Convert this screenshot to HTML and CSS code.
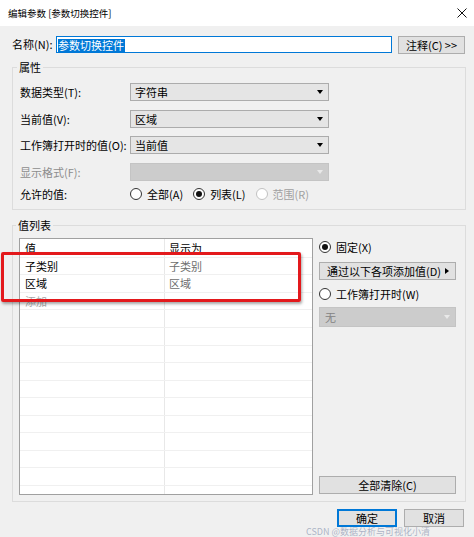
FILE: index.html
```html
<!DOCTYPE html>
<html lang="zh-CN">
<head>
<meta charset="utf-8">
<title>编辑参数</title>
<link rel="stylesheet" href="styles.css">
</head>
<body>
<div class="window">
  <div class="titlebar">
    <span class="title">编辑参数 [参数切换控件]</span>
    <svg class="close" width="10" height="10" viewBox="0 0 10 10"><path d="M0.5 0.5 L9.5 9.5 M9.5 0.5 L0.5 9.5" stroke="#111" stroke-width="1" fill="none"/></svg>
  </div>
  <div class="content">
    <div class="name-row">
      <span class="name-label">名称(N):</span>
      <div class="name-input"><span class="sel">参数切换控件</span></div>
      <div class="btn btn-note">注释(C) &gt;&gt;</div>
    </div>

    <fieldset class="group props">
      <legend>属性</legend>
      <div class="prop-rows">
        <div class="prop-row">
          <span class="plabel">数据类型(T):</span>
          <div class="combo"><span>字符串</span><i class="arrow"></i></div>
        </div>
        <div class="prop-row">
          <span class="plabel">当前值(V):</span>
          <div class="combo"><span>区域</span><i class="arrow"></i></div>
        </div>
        <div class="prop-row">
          <span class="plabel">工作簿打开时的值(O):</span>
          <div class="combo"><span>当前值</span><i class="arrow"></i></div>
        </div>
        <div class="prop-row">
          <span class="plabel disabled">显示格式(F):</span>
          <div class="combo combo-disabled"><span></span><i class="arrow"></i></div>
        </div>
        <div class="prop-row radio-row">
          <span class="plabel">允许的值:</span>
          <span class="radio"><i class="dot"></i>全部(A)</span>
          <span class="radio checked"><i class="dot"></i>列表(L)</span>
          <span class="radio radio-disabled"><i class="dot"></i>范围(R)</span>
        </div>
      </div>
    </fieldset>

    <fieldset class="group values">
      <legend>值列表</legend>
      <div class="values-inner">
        <div class="list">
          <div class="lrow lhead"><div class="c1">值</div><div class="c2">显示为</div></div>
          <div class="lrow"><div class="c1">子类别</div><div class="c2 dim">子类别</div></div>
          <div class="lrow"><div class="c1">区域</div><div class="c2 dim">区域</div></div>
          <div class="lrow"><div class="c1 add">添加</div><div class="c2"></div></div>
          <div class="lrow"><div class="c1"></div><div class="c2"></div></div>
          <div class="lrow"><div class="c1"></div><div class="c2"></div></div>
          <div class="lrow"><div class="c1"></div><div class="c2"></div></div>
          <div class="lrow"><div class="c1"></div><div class="c2"></div></div>
          <div class="lrow"><div class="c1"></div><div class="c2"></div></div>
          <div class="lrow"><div class="c1"></div><div class="c2"></div></div>
          <div class="lrow"><div class="c1"></div><div class="c2"></div></div>
          <div class="lrow"><div class="c1"></div><div class="c2"></div></div>
          <div class="lrow"><div class="c1"></div><div class="c2"></div></div>
          <div class="lrow"><div class="c1"></div><div class="c2"></div></div>
          <div class="lrow"><div class="c1"></div><div class="c2"></div></div>
        </div>
        <div class="side">
          <span class="radio checked side-r1"><i class="dot"></i>固定(X)</span>
          <div class="btn btn-add"><span>通过以下各项添加值(D)</span><i class="rarrow"></i></div>
          <span class="radio side-r2"><i class="dot"></i>工作簿打开时(W)</span>
          <div class="combo combo-disabled side-combo"><span>无</span><i class="arrow"></i></div>
          <div class="btn btn-clear">全部清除(C)</div>
        </div>
      </div>
    </fieldset>

    <div class="footer">
      <div class="btn btn-ok">确定</div>
      <div class="btn">取消</div>
    </div>
  </div>

  <div class="highlight"></div>
  <div class="watermark">CSDN @数据分析与可视化小清</div>
</div>
</body>
</html>
```

FILE: styles.css
```css
* { box-sizing: border-box; }
html, body { margin: 0; padding: 0; }
body {
  width: 474px;
  height: 537px;
  overflow: hidden;
  background: #f0f0f0;
  font-family: "Noto Sans CJK SC", "Microsoft YaHei", sans-serif;
  font-size: 11px;
  line-height: 14px;
  color: #000;
}
.window {
  position: relative;
  height: 537px;
  display: flex;
  flex-direction: column;
}
.titlebar {
  height: 26px;
  flex: none;
  background: #fff;
  display: flex;
  align-items: center;
  justify-content: space-between;
  padding: 0 7px 0 8px;
}
.title { font-size: 9.5px; }
.close { display: block; }

.content {
  flex: 1;
  display: flex;
  flex-direction: column;
  padding: 10px 8px 0 12px;
}

/* name row */
.name-row {
  display: flex;
  align-items: flex-start;
  height: 18px;
}
.name-label { width: 44px; line-height: 17px; }
.name-input {
  width: 336px;
  height: 17px;
  border: 1px solid #0078d7;
  background: #fff;
  padding: 1px;
}
.sel {
  display: inline-block;
  background: #0078d7;
  color: #fff;
  line-height: 13px;
  padding-right: 1px;
}
.btn {
  background: #e1e1e1;
  border: 1px solid #adadad;
  height: 18px;
  width: 60px;
  display: flex;
  align-items: center;
  justify-content: center;
  line-height: 14px;
}
.btn-note { width: 67px; margin-left: 6px; }

/* groups */
.group {
  margin: 0;
  min-width: 0;
  border: 1px solid #dcdcdc;
}
.group legend {
  padding: 0 2px;
  margin-left: -3px;
  line-height: 14px;
  height: 14px;
}
.props {
  margin-top: 6px;
  padding: 9px 8px 6px 7px;
}
.prop-rows {
  display: flex;
  flex-direction: column;
  gap: 8.5px;
}
.prop-row {
  display: flex;
  align-items: center;
  height: 18px;
}
.radio-row { margin-top: -4px; }
.plabel { width: 110px; flex: none; }
.disabled { color: #8d8d8d; }

.combo {
  width: 199px;
  height: 18px;
  background: #e5e5e5;
  border: 1px solid #acacac;
  display: flex;
  align-items: center;
  justify-content: space-between;
  padding: 0 5px 0 4px;
}
.arrow {
  width: 0;
  height: 0;
  border-left: 3.5px solid transparent;
  border-right: 3.5px solid transparent;
  border-top: 4px solid #000;
}
.combo-disabled {
  background: #cccccc;
  border-color: #c4c4c4;
  color: #838383;
}
.combo-disabled .arrow { border-top-color: #e9e9e9; }

.radio {
  display: inline-flex;
  align-items: center;
  margin-right: 10px;
}
.radio .dot {
  width: 12px;
  height: 12px;
  border: 1px solid #333;
  border-radius: 50%;
  background: #fff;
  margin-right: 5px;
  display: flex;
  align-items: center;
  justify-content: center;
}
.radio.checked .dot::after {
  content: "";
  width: 6px;
  height: 6px;
  border-radius: 50%;
  background: #111;
}
.radio-disabled { color: #a0a0a0; }
.radio-disabled .dot { border-color: #c2c2c2; }

/* values group */
.values {
  margin-top: 8px;
  padding: 6px 8px 6px 6px;
}
.values-inner {
  display: flex;
  align-items: stretch;
  height: 257px;
}
.list {
  width: 294px;
  height: 257px;
  flex: none;
  background: #fff;
  border: 1px solid #a0a0a0;
  overflow: hidden;
}
.lrow {
  display: grid;
  grid-template-columns: 145px 1fr;
  height: 17.56px;
  border-bottom: 1px solid #f0f0f0;
}
.lhead { height: 18.8px; }
.lrow .c1 {
  border-right: 1px solid #e8e8e8;
  padding-left: 5px;
  line-height: 16px;
}
.lrow .c2 {
  padding-left: 4px;
  line-height: 16px;
}
.lhead .c1, .lhead .c2 { line-height: 18px; }
.dim { color: #6d6d6d; }
.add { color: #a8a8a8; }

.side {
  width: 137px;
  margin-left: 6px;
  display: flex;
  flex-direction: column;
}
.side .radio { margin-right: 0; height: 14px; }
.side-r1 { margin-top: 2px; }
.btn-add {
  width: 137px;
  margin-top: 8px;
  justify-content: space-between;
  padding: 0 6px 0 7px;
}
.rarrow {
  width: 0;
  height: 0;
  border-top: 3.5px solid transparent;
  border-bottom: 3.5px solid transparent;
  border-left: 4px solid #000;
}
.side-r2 { margin-top: 7px; }
.side-combo {
  width: 137px;
  height: 20px;
  margin-top: 6px;
  padding-left: 5px;
}
.btn-clear {
  width: 137px;
  margin-top: auto;
  margin-bottom: 1px;
}

.footer {
  display: flex;
  justify-content: flex-end;
  gap: 7px;
  margin-top: 7px;
  margin-right: 2px;
}
.btn-ok {
  border-color: #0078d7;
  box-shadow: inset 0 0 0 1px #0078d7;
}

.highlight {
  position: absolute;
  left: 1px;
  top: 252px;
  width: 300px;
  height: 50px;
  border: 3px solid #e3191c;
  border-radius: 2px;
  box-shadow: 1px 2px 3px rgba(0, 0, 0, 0.35);
}
.watermark {
  position: absolute;
  left: 306px;
  top: 527px;
  font-size: 9px;
  line-height: 10px;
  color: rgba(110, 125, 160, 0.55);
  white-space: nowrap;
}
```
